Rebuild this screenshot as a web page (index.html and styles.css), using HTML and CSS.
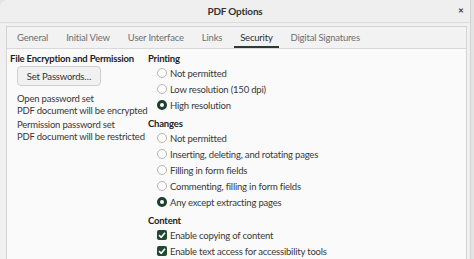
FILE: index.html
```html
<!DOCTYPE html>
<html lang="en">
<head>
    <meta charset="UTF-8">
    <title>PDF Options</title>
    <link rel="stylesheet" href="styles.css">
</head>
<body>
<div class="window">
    <div class="titlebar">
        <span class="title">PDF Options</span>
        <span class="close">&#x2715;</span>
    </div>
    <div class="notebook">
        <div class="tabs">
            <span class="tab">General</span>
            <span class="tab">Initial View</span>
            <span class="tab">User Interface</span>
            <span class="tab">Links</span>
            <span class="tab active">Security</span>
            <span class="tab">Digital Signatures</span>
        </div>
        <div class="page">
            <!-- left column -->
            <div class="col-left">
                <div class="heading">File Encryption and Permission</div>
                <button class="btn">Set Passwords…</button>
                <p class="note">Open password set<br>PDF document will be encrypted</p>
                <p class="note">Permission password set<br>PDF document will be restricted</p>
            </div>
            <!-- right column -->
            <div class="col-right">
                <div class="heading">Printing</div>
                <div class="opt"><span class="radio"></span>Not permitted</div>
                <div class="opt"><span class="radio"></span>Low resolution (150 dpi)</div>
                <div class="opt"><span class="radio on"></span>High resolution</div>

                <div class="heading sec">Changes</div>
                <div class="opt"><span class="radio"></span>Not permitted</div>
                <div class="opt"><span class="radio"></span>Inserting, deleting, and rotating pages</div>
                <div class="opt"><span class="radio"></span>Filling in form fields</div>
                <div class="opt"><span class="radio"></span>Commenting, filling in form fields</div>
                <div class="opt"><span class="radio on"></span>Any except extracting pages</div>

                <div class="heading sec">Content</div>
                <div class="opt"><span class="check"><svg width="10" height="10" viewBox="0 0 10 10"><path d="M2 5.2 L4.2 7.3 L8 2.8" fill="none" stroke="#fff" stroke-width="1.6"/></svg></span>Enable copying of content</div>
                <div class="opt"><span class="check"><svg width="10" height="10" viewBox="0 0 10 10"><path d="M2 5.2 L4.2 7.3 L8 2.8" fill="none" stroke="#fff" stroke-width="1.6"/></svg></span>Enable text access for accessibility tools</div>
            </div>
        </div>
    </div>
</div>
</body>
</html>
```

FILE: styles.css
```css
html, body {
    margin: 0;
    padding: 0;
    background: #e4e4e4;
}
body {
    font-family: Lato, "Liberation Sans", sans-serif;
    font-size: 9.5px;
    letter-spacing: -0.2px;
    color: #383838;
}
.window {
    width: 470px;
    height: 259px;
    background: #f0f0f0;
    border-top-left-radius: 8px;
    overflow: hidden;
    box-shadow: 1px 0 0 #d2d2d2;
}
.titlebar {
    height: 22px;
    border-bottom: 1px solid #dcdcdc;
    background: #efefef;
    display: flex;
    align-items: center;
    justify-content: center;
    position: relative;
}
.title {
    font-weight: bold;
    font-size: 10px;
    color: #333;
}
.close {
    position: absolute;
    right: 6px;
    top: 6px;
    font-size: 7px;
    font-weight: bold;
    color: #444;
}
.notebook {
    margin: 3px 3px 0 6px;
    border: 1px solid #d4d4d4;
    border-bottom: none;
    height: 240px;
}
.tabs {
    height: 21px;
    display: flex;
    padding-left: 10px;
    gap: 18px;
    background: #f2f2f2;
    border-bottom: 1px solid #d9d9d9;
}
.tab {
    line-height: 21px;
    color: #6f6f6f;
}
.tab.active {
    color: #2d2d2d;
    box-shadow: inset 0 -2px 0 #2a3b33;
    padding: 0 6px;
    margin: 0 -6px;
}
.page {
    background: #fafafa;
    height: 220px;
    display: flex;
}
.col-left {
    width: 138px;
    padding-left: 3px;
    white-space: nowrap;
}
.heading {
    font-weight: bold;
    color: #222;
    margin-top: 3px;
    height: 13px;
    line-height: 13px;
}
.heading.sec {
    margin-top: 4px;
}
.btn {
    display: block;
    margin: 1px 0 0 7px;
    width: 84px;
    height: 20px;
    border: 1px solid #cfcfcf;
    border-radius: 4px;
    background: #f1f1f1;
    font-family: inherit;
    font-size: 9.5px;
    letter-spacing: -0.2px;
    color: #333;
    padding: 0;
}
.note {
    margin: 7px 0 0 7px;
    line-height: 12px;
}
.note + .note {
    margin-top: 2px;
}
.opt {
    height: 16px;
    display: flex;
    align-items: center;
    padding-left: 9px;
}
.radio {
    width: 10px;
    height: 10px;
    border: 1px solid #b4b4b4;
    border-radius: 50%;
    background: #fff;
    margin-right: 3px;
    box-sizing: border-box;
}
.radio.on {
    border: 3px solid #1d3f2e;
}
.check {
    width: 10px;
    height: 10px;
    border-radius: 2px;
    background: #1d4a30;
    margin-right: 3px;
    display: flex;
    align-items: center;
    justify-content: center;
}
```
